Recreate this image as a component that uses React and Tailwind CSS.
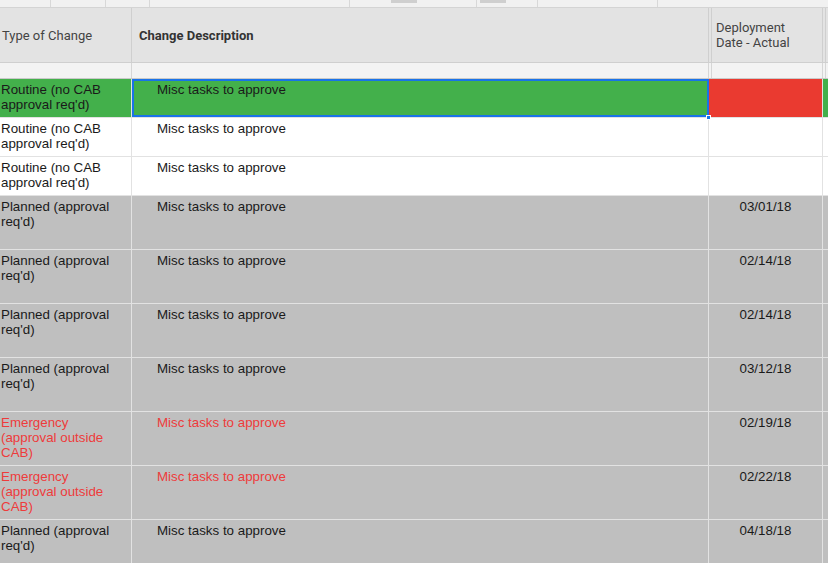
import React from 'react';

const rows = [
  { type: "Routine (no CAB approval req'd)", date: '', kind: 'selected' },
  { type: "Routine (no CAB approval req'd)", date: '', kind: 'white' },
  { type: "Routine (no CAB approval req'd)", date: '', kind: 'white' },
  { type: "Planned (approval req'd)", date: '03/01/18', kind: 'grey' },
  { type: "Planned (approval req'd)", date: '02/14/18', kind: 'grey' },
  { type: "Planned (approval req'd)", date: '02/14/18', kind: 'grey' },
  { type: "Planned (approval req'd)", date: '03/12/18', kind: 'grey' },
  { type: 'Emergency (approval outside CAB)', date: '02/19/18', kind: 'grey', red: true },
  { type: 'Emergency (approval outside CAB)', date: '02/22/18', kind: 'grey', red: true },
  { type: "Planned (approval req'd)", date: '04/18/18', kind: 'grey' },
];

const topDividers = [50, 105, 149, 349, 476, 537, 657];

const Row = ({ row }) => {
  const selected = row.kind === 'selected';
  const grey = row.kind === 'grey';
  const h = grey ? 'h-[54px]' : 'h-[39px]';
  const bg = selected ? 'bg-[#43b04b]' : grey ? 'bg-[#bfbfbf]' : 'bg-white';
  const text = row.red ? 'text-[#ee3b3b]' : 'text-[#1a1a1a]';
  const line = 'border-[#e2e2e2]';

  return (
    <div className={`grid grid-cols-[132px_577px_114px_1fr] ${h} text-[#1a1a1a]`}>
      <div className={`${bg} ${text} border-r border-b ${line} pl-[1px] pr-[6px] pt-[3px] leading-[15px]`}>
        {row.type}
      </div>
      {selected ? (
        <div className="relative bg-[#43b04b] border-b border-[#e2e2e2]">
          <div className="h-full border-2 border-[#1a73e8] pl-[23px] pt-[1px] leading-[15px]">
            Misc tasks to approve
          </div>
          <div className="absolute right-[-2px] bottom-[-3px] w-[5px] h-[5px] bg-[#1a73e8] border border-white" />
        </div>
      ) : (
        <div className={`${bg} ${text} border-r border-b ${line} pl-[25px] pt-[3px] leading-[15px]`}>
          Misc tasks to approve
        </div>
      )}
      <div className={`${selected ? 'bg-[#ea3a30]' : bg} border-r border-b ${line} text-center pt-[3px] leading-[15px]`}>
        {row.date}
      </div>
      <div className={`${bg} border-b ${line}`} />
    </div>
  );
};

const App = () => {
  return (
    <div className="w-[828px] h-[563px] overflow-hidden bg-white text-[13.33px] font-['Liberation_Sans',Arial,sans-serif]">
      {/* toolbar strip */}
      <div className="relative h-[8px] bg-[#f1f1f1] border-b border-[#d4d4d4]">
        {topDividers.map((x) => (
          <div key={x} className="absolute top-0 bottom-0 w-px bg-[#d8d8d8]" style={{ left: x }} />
        ))}
        <div className="absolute top-0 left-[391px] w-[26px] h-[3px] bg-[#cfcfcf]" />
        <div className="absolute top-0 left-[480px] w-[26px] h-[3px] bg-[#cfcfcf]" />
      </div>

      {/* header */}
      <div className="grid grid-cols-[132px_577px_114px_1fr] h-[55px] bg-[#e3e3e3] text-[13px] text-[#444] font-['Roboto',Arial,sans-serif]">
        <div className="border-r border-b border-[#cfcfcf] flex items-center pl-[2px] pt-[2px]">Type of Change</div>
        <div className="border-r border-b border-[#cfcfcf] flex items-center pl-[7px] pt-[2px] font-bold text-[#333]">
          Change Description
        </div>
        <div className="border-r border-b border-[#cfcfcf] flex">
          <div className="ml-[2px] flex-1 border-l border-[#cfcfcf] pl-[4px] pt-[12px] leading-[15px]">
            Deployment
            <br />
            Date - Actual
          </div>
        </div>
        <div className="border-b border-[#cfcfcf] flex">
          <div className="ml-[2px] flex-1 border-l border-[#cfcfcf]" />
        </div>
      </div>

      {/* frozen spacer row */}
      <div className="grid grid-cols-[132px_577px_114px_1fr] h-[16px] bg-[#f3f3f3] border-b border-[#c9c9c9]">
        <div className="border-r border-[#d6d6d6]" />
        <div className="border-r border-[#d6d6d6]" />
        <div className="border-r border-[#d6d6d6] flex">
          <div className="ml-[2px] flex-1 border-l border-[#d6d6d6]" />
        </div>
        <div className="flex">
          <div className="ml-[2px] flex-1 border-l border-[#d6d6d6]" />
        </div>
      </div>

      {rows.map((row, i) => (
        <Row key={i} row={row} />
      ))}
    </div>
  );
};

export default App;
